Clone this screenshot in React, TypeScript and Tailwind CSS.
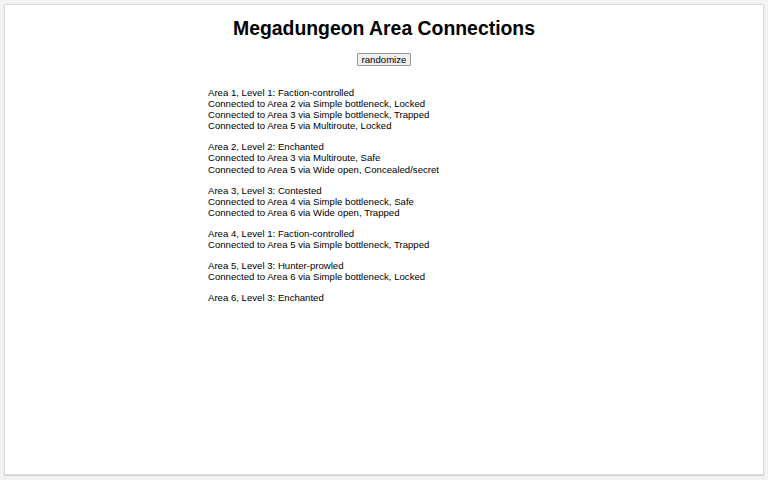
import React, { useState } from 'react';

type Link = { to: number; via: string; state: string };
type Area = { id: number; level: number; kind: string; links: Link[] };

const initialAreas: Area[] = [
  {
    id: 1,
    level: 1,
    kind: 'Faction-controlled',
    links: [
      { to: 2, via: 'Simple bottleneck', state: 'Locked' },
      { to: 3, via: 'Simple bottleneck', state: 'Trapped' },
      { to: 5, via: 'Multiroute', state: 'Locked' },
    ],
  },
  {
    id: 2,
    level: 2,
    kind: 'Enchanted',
    links: [
      { to: 3, via: 'Multiroute', state: 'Safe' },
      { to: 5, via: 'Wide open', state: 'Concealed/secret' },
    ],
  },
  {
    id: 3,
    level: 3,
    kind: 'Contested',
    links: [
      { to: 4, via: 'Simple bottleneck', state: 'Safe' },
      { to: 6, via: 'Wide open', state: 'Trapped' },
    ],
  },
  {
    id: 4,
    level: 1,
    kind: 'Faction-controlled',
    links: [{ to: 5, via: 'Simple bottleneck', state: 'Trapped' }],
  },
  {
    id: 5,
    level: 3,
    kind: 'Hunter-prowled',
    links: [{ to: 6, via: 'Simple bottleneck', state: 'Locked' }],
  },
  { id: 6, level: 3, kind: 'Enchanted', links: [] },
];

export default function App() {
  const [areas] = useState<Area[]>(initialAreas);

  return (
    <div className="min-h-screen bg-[#f3f3f3] p-1 font-['Liberation_Sans',Arial,sans-serif] text-black">
      <div className="h-[471px] bg-white border border-[#dcdcdc] shadow-[0_1px_1px_rgba(0,0,0,0.12)] pt-3">
        <h1 className="text-center text-[19.4px] font-bold leading-[1.15]">Megadungeon Area Connections</h1>

        <div className="flex justify-center mt-[14px]">
          <button className="h-[13px] px-[4px] text-[9.6px] leading-none bg-[#efefef] border border-[#9a9a9a] rounded-[1px] text-black">
            randomize
          </button>
        </div>

        {/* area list */}
        <div className="w-[352px] mx-auto mt-[21px] text-[9.6px] leading-[1.15]">
          {areas.map((a) => (
            <div key={a.id} className="mb-[10px]">
              <div>
                Area {a.id}, Level {a.level}: {a.kind}
              </div>
              {a.links.map((l, i) => (
                <div key={i}>
                  Connected to Area {l.to} via {l.via}, {l.state}
                </div>
              ))}
            </div>
          ))}
        </div>
      </div>
    </div>
  );
}
